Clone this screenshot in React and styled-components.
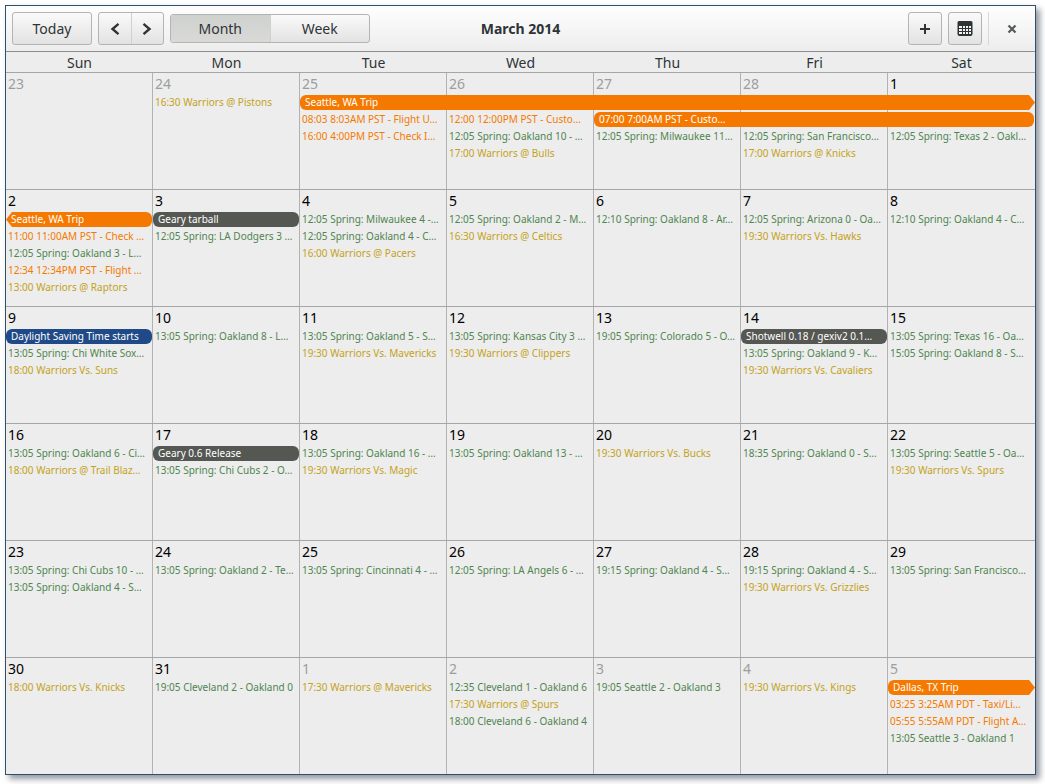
import React, { useState } from "react";
import styled, { createGlobalStyle, css } from "styled-components";

const GlobalStyle = createGlobalStyle`
  * {
    box-sizing: border-box;
  }

  body {
    margin: 0;
    background: #fff;
    color: #2e3436;
    font-family: "Noto Sans", "Open Sans", sans-serif;
    font-size: 14px;
  }
`;

const Page = styled.div`
  display: flex;
  min-height: 100vh;
  padding: 5px 9px 9px 5px;
`;

const Window = styled.main`
  flex: 1;
  min-width: 0;
  display: flex;
  flex-direction: column;
  background: #ededed;
  border: 1px solid #2f4f6b;
  box-shadow: 4px 4px 6px rgba(40, 50, 70, 0.5);
`;

const HeaderBar = styled.header`
  display: grid;
  grid-template-columns: 1fr auto 1fr;
  align-items: center;
  height: 46px;
  padding: 0 6px;
  background: linear-gradient(#fefefe, #ededed);
  border-bottom: 1px solid #8f8f8f;
`;

const HeaderGroup = styled.div`
  display: flex;
  align-items: center;
  justify-content: ${(props) => (props.$end ? "flex-end" : "flex-start")};
  gap: 6px;
`;

const Title = styled.h1`
  margin: 0;
  font-size: 14px;
  font-weight: 700;
`;

const raised = css`
  border: 1px solid #b4b4b4;
  border-radius: 3px;
  background: linear-gradient(#fafafa, #e2e2e2);
`;

const Button = styled.button`
  ${raised}
  display: flex;
  align-items: center;
  justify-content: center;
  width: ${(props) => (props.$wide ? "80px" : "34px")};
  height: 33px;
  padding: 0;
  color: inherit;
  font: inherit;
`;

const ButtonGroup = styled.div`
  ${raised}
  display: flex;
  width: ${(props) => props.$width};
  height: ${(props) => props.$height};
  overflow: hidden;
`;

const GroupButton = styled.button`
  flex: 1;
  display: flex;
  align-items: center;
  justify-content: center;
  padding: 0;
  border: 0;
  color: inherit;
  font: inherit;
  background: ${(props) =>
    props.$active ? "linear-gradient(#cfd1ce, #d9dad8)" : "transparent"};

  & + & {
    border-left: 1px solid #d0d0d0;
  }
`;

const Separator = styled.div`
  width: 1px;
  height: 33px;
  background: #d8d8d8;
`;

const CloseButton = styled(Button)`
  border: 0;
  background: none;
`;

const Weekdays = styled.div`
  display: grid;
  grid-template-columns: repeat(7, 1fr);
  height: 20px;
  line-height: 22px;
  text-align: center;
`;

const Month = styled.div`
  flex: 1;
  display: grid;
  grid-template-rows: repeat(6, minmax(117px, 1fr));
`;

const Week = styled.section`
  display: grid;
  grid-template-columns: repeat(7, minmax(0, 1fr));
  grid-template-rows: 22px repeat(4, 17px) 1fr;
  border-top: 1px solid #a6a6a6;
`;

const Day = styled.div`
  grid-column: ${(props) => props.$col};
  grid-row: 1 / -1;
  padding-left: 2px;
  border-right: ${(props) => (props.$col < 7 ? "1px solid #b2b2b2" : "0")};
  color: ${(props) => (props.$dim ? "#9c9e9d" : "#000")};
  line-height: 22px;
`;

const eventText = css`
  grid-column: ${(props) => props.$col} / span ${(props) => props.$span || 1};
  grid-row: ${(props) => props.$lane + 2};
  height: 15px;
  font-size: 10px;
  line-height: 14px;
  white-space: nowrap;
  overflow: hidden;
`;

const Event = styled.div`
  ${eventText}
  padding-left: 2px;
  color: ${(props) => props.$color};
`;

const arrows = {
  right:
    "polygon(0 0, calc(100% - 6px) 0, 100% 50%, calc(100% - 6px) 100%, 0 100%)",
  left: "polygon(6px 0, 100% 0, 100% 100%, 6px 100%, 0 50%)",
};

const Bar = styled.div`
  ${eventText}
  z-index: 1;
  margin-right: ${(props) => (props.$arrow === "right" ? "0" : "1px")};
  padding-left: 5px;
  border-radius: ${(props) =>
    ({ right: "6px 0 0 6px", left: "0 6px 6px 0" })[props.$arrow] || "6px"};
  clip-path: ${(props) => arrows[props.$arrow] || "none"};
  background: ${(props) => props.$color};
  color: #fff;
`;

const ChevronIcon = ({ flip }) => (
  <svg width="16" height="16" viewBox="0 0 16 16" fill="none" stroke="#2e3436" strokeWidth="2.400">
    <path d={flip ? "M4.500 2.800L10.500 8l-6 5.200" : "M11.500 2.800L5.500 8l6 5.200"} />
  </svg>
);

const PlusIcon = () => (
  <svg width="16" height="16" viewBox="0 0 16 16" fill="#2e3436">
    <path d="M7 3h2v4h4v2H9v4H7V9H3V7h4z" />
  </svg>
);

const CalendarIcon = () => (
  <svg width="16" height="16" viewBox="0 0 16 16">
    <path
      d="M2 0h12a1.500 1.500 0 0 1 1.500 1.500V13a2 2 0 0 1-2 2h-11a2 2 0 0 1-2-2V1.500A1.500 1.500 0 0 1 2 0z"
      fill="#2e3436"
    />
    <path
      d="M2 5h3v2H2zM6 5h2v2H6zM9 5h2v2H9zM12 5h2v2h-2zM2 8h3v2H2zM6 8h2v2H6zM9 8h2v2H9zM12 8h2v2h-2zM2 11h3v2H2zM6 11h2v2H6zM9 11h2v2H9zM12 11h2v2h-2z"
      fill="#f4f4f4"
    />
  </svg>
);

const CloseIcon = () => (
  <svg width="16" height="16" viewBox="0 0 16 16" stroke="#555a5c" strokeWidth="2.200">
    <path d="M4.500 4.500l7 7M11.500 4.500l-7 7" />
  </svg>
);

const GREEN = "#4f8550";
const GOLD = "#c4a21a";
const ORANGE = "#f57900";
const GRAY = "#555753";
const BLUE = "#204a87";

const g = (col, lane, text) => ({ col, lane, text, color: GREEN });
const y = (col, lane, text) => ({ col, lane, text, color: GOLD });
const o = (col, lane, text) => ({ col, lane, text, color: ORANGE });
const bar = (col, lane, text, color, extra) => ({
  col,
  lane,
  text,
  color,
  bar: true,
  ...extra,
});

const weekdays = ["Sun", "Mon", "Tue", "Wed", "Thu", "Fri", "Sat"];

const weeks = [
  {
    days: [23, 24, 25, 26, 27, 28, 1],
    dim: [0, 6],
    events: [
      y(2, 0, "16:30 Warriors @ Pistons"),
      bar(3, 0, "Seattle, WA Trip", ORANGE, { span: 5, arrow: "right" }),
      o(3, 1, "08:03 8:03AM PST - Flight U…"),
      o(3, 2, "16:00 4:00PM PST - Check I…"),
      o(4, 1, "12:00 12:00PM PST - Custo…"),
      g(4, 2, "12:05 Spring: Oakland 10 - …"),
      y(4, 3, "17:00 Warriors @ Bulls"),
      bar(5, 1, "07:00 7:00AM PST - Custo…", ORANGE, { span: 3 }),
      g(5, 2, "12:05 Spring: Milwaukee 11…"),
      g(6, 2, "12:05 Spring: San Francisco…"),
      y(6, 3, "17:00 Warriors @ Knicks"),
      g(7, 2, "12:05 Spring: Texas 2 - Oakl…"),
    ],
  },
  {
    days: [2, 3, 4, 5, 6, 7, 8],
    events: [
      bar(1, 0, "Seattle, WA Trip", ORANGE, { arrow: "left" }),
      o(1, 1, "11:00 11:00AM PST - Check …"),
      g(1, 2, "12:05 Spring: Oakland 3 - L…"),
      o(1, 3, "12:34 12:34PM PST - Flight …"),
      y(1, 4, "13:00 Warriors @ Raptors"),
      bar(2, 0, "Geary tarball", GRAY),
      g(2, 1, "12:05 Spring: LA Dodgers 3 …"),
      g(3, 0, "12:05 Spring: Milwaukee 4 -…"),
      g(3, 1, "12:05 Spring: Oakland 4 - C…"),
      y(3, 2, "16:00 Warriors @ Pacers"),
      g(4, 0, "12:05 Spring: Oakland 2 - M…"),
      y(4, 1, "16:30 Warriors @ Celtics"),
      g(5, 0, "12:10 Spring: Oakland 8 - Ar…"),
      g(6, 0, "12:05 Spring: Arizona 0 - Oa…"),
      y(6, 1, "19:30 Warriors Vs. Hawks"),
      g(7, 0, "12:10 Spring: Oakland 4 - C…"),
    ],
  },
  {
    days: [9, 10, 11, 12, 13, 14, 15],
    events: [
      bar(1, 0, "Daylight Saving Time starts", BLUE),
      g(1, 1, "13:05 Spring: Chi White Sox…"),
      y(1, 2, "18:00 Warriors Vs. Suns"),
      g(2, 0, "13:05 Spring: Oakland 8 - L…"),
      g(3, 0, "13:05 Spring: Oakland 5 - S…"),
      y(3, 1, "19:30 Warriors Vs. Mavericks"),
      g(4, 0, "13:05 Spring: Kansas City 3 …"),
      y(4, 1, "19:30 Warriors @ Clippers"),
      g(5, 0, "19:05 Spring: Colorado 5 - O…"),
      bar(6, 0, "Shotwell 0.18 / gexiv2 0.1…", GRAY),
      g(6, 1, "13:05 Spring: Oakland 9 - K…"),
      y(6, 2, "19:30 Warriors Vs. Cavaliers"),
      g(7, 0, "13:05 Spring: Texas 16 - Oa…"),
      g(7, 1, "15:05 Spring: Oakland 8 - S…"),
    ],
  },
  {
    days: [16, 17, 18, 19, 20, 21, 22],
    events: [
      g(1, 0, "13:05 Spring: Oakland 6 - Ci…"),
      y(1, 1, "18:00 Warriors @ Trail Blaz…"),
      bar(2, 0, "Geary 0.6 Release", GRAY),
      g(2, 1, "13:05 Spring: Chi Cubs 2 - O…"),
      g(3, 0, "13:05 Spring: Oakland 16 - …"),
      y(3, 1, "19:30 Warriors Vs. Magic"),
      g(4, 0, "13:05 Spring: Oakland 13 - …"),
      y(5, 0, "19:30 Warriors Vs. Bucks"),
      g(6, 0, "18:35 Spring: Oakland 0 - S…"),
      g(7, 0, "13:05 Spring: Seattle 5 - Oa…"),
      y(7, 1, "19:30 Warriors Vs. Spurs"),
    ],
  },
  {
    days: [23, 24, 25, 26, 27, 28, 29],
    events: [
      g(1, 0, "13:05 Spring: Chi Cubs 10 - …"),
      g(1, 1, "13:05 Spring: Oakland 4 - S…"),
      g(2, 0, "13:05 Spring: Oakland 2 - Te…"),
      g(3, 0, "13:05 Spring: Cincinnati 4 - …"),
      g(4, 0, "12:05 Spring: LA Angels 6 - …"),
      g(5, 0, "19:15 Spring: Oakland 4 - S…"),
      g(6, 0, "19:15 Spring: Oakland 4 - S…"),
      y(6, 1, "19:30 Warriors Vs. Grizzlies"),
      g(7, 0, "13:05 Spring: San Francisco…"),
    ],
  },
  {
    days: [30, 31, 1, 2, 3, 4, 5],
    dim: [2, 7],
    events: [
      y(1, 0, "18:00 Warriors Vs. Knicks"),
      g(2, 0, "19:05 Cleveland 2 - Oakland 0"),
      y(3, 0, "17:30 Warriors @ Mavericks"),
      g(4, 0, "12:35 Cleveland 1 - Oakland 6"),
      y(4, 1, "17:30 Warriors @ Spurs"),
      g(4, 2, "18:00 Cleveland 6 - Oakland 4"),
      g(5, 0, "19:05 Seattle 2 - Oakland 3"),
      y(6, 0, "19:30 Warriors Vs. Kings"),
      bar(7, 0, "Dallas, TX Trip", ORANGE, { arrow: "right" }),
      o(7, 1, "03:25 3:25AM PDT - Taxi/Li…"),
      o(7, 2, "05:55 5:55AM PDT - Flight A…"),
      g(7, 3, "13:05 Seattle 3 - Oakland 1"),
    ],
  },
];

const WeekRow = ({ days, dim = [0, 0], events }) => (
  <Week>
    {days.map((day, i) => (
      <Day key={day} $col={i + 1} $dim={i >= dim[0] && i < dim[1]}>
        {day}
      </Day>
    ))}
    {events.map((event) => {
      const Item = event.bar ? Bar : Event;
      return (
        <Item
          key={`${event.col}-${event.lane}`}
          $col={event.col}
          $lane={event.lane}
          $span={event.span}
          $arrow={event.arrow}
          $color={event.color}
        >
          {event.text}
        </Item>
      );
    })}
  </Week>
);

const App = () => {
  const [view, setView] = useState("Month");

  return (
    <Page>
      <GlobalStyle />
      <Window>
        <HeaderBar>
          <HeaderGroup>
            <Button $wide>Today</Button>
            <ButtonGroup $width="66px" $height="33px">
              <GroupButton aria-label="Previous month">
                <ChevronIcon />
              </GroupButton>
              <GroupButton aria-label="Next month">
                <ChevronIcon flip />
              </GroupButton>
            </ButtonGroup>
            <ButtonGroup $width="200px" $height="29px">
              {["Month", "Week"].map((name) => (
                <GroupButton
                  key={name}
                  $active={view === name}
                  aria-pressed={view === name}
                  onClick={() => setView(name)}
                >
                  {name}
                </GroupButton>
              ))}
            </ButtonGroup>
          </HeaderGroup>
          <Title>March 2014</Title>
          <HeaderGroup $end>
            <Button aria-label="New event">
              <PlusIcon />
            </Button>
            <Button aria-label="Calendars">
              <CalendarIcon />
            </Button>
            <Separator />
            <CloseButton aria-label="Close">
              <CloseIcon />
            </CloseButton>
          </HeaderGroup>
        </HeaderBar>
        <Weekdays>
          {weekdays.map((name) => (
            <span key={name}>{name}</span>
          ))}
        </Weekdays>
        <Month>
          {weeks.map((week) => (
            <WeekRow key={week.days.join("-")} {...week} />
          ))}
        </Month>
      </Window>
    </Page>
  );
};

export default App;
